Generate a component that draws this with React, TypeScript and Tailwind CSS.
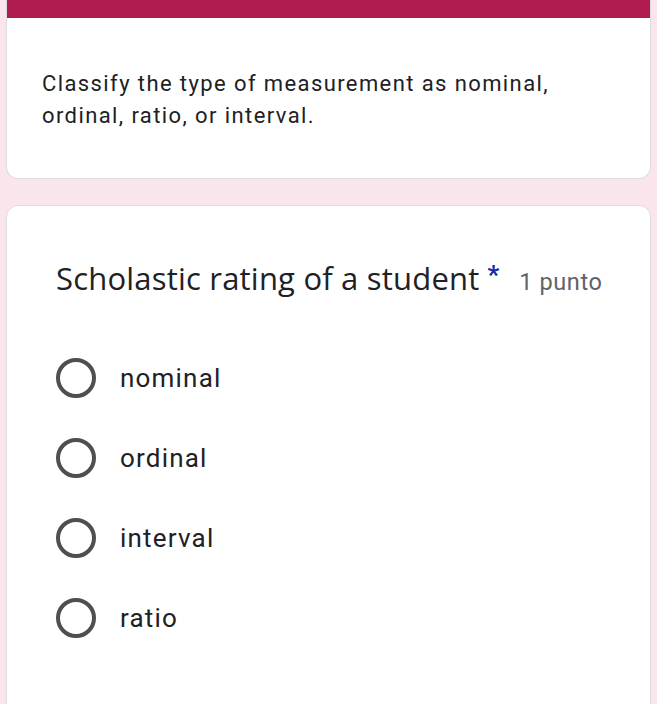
import React from 'react';

const options = ['nominal', 'ordinal', 'interval', 'ratio'];

function Radio() {
  return (
    <span className="block w-[40px] h-[40px] rounded-full border-[4px] border-[#4f4f4f] shrink-0" />
  );
}

export default function App() {
  return (
    <div className="w-[657px] h-[704px] overflow-hidden bg-[#fbe5ec] px-[6px]" style={{ fontFamily: 'Roboto, "Liberation Sans", sans-serif' }}>
      {/* Description card */}
      <div className="bg-white rounded-b-[12px] border border-t-0 border-[#dadce0] overflow-hidden h-[179px]">
        <div className="h-[18px] bg-[#b01c4f]" />
        <div className="pl-[35px] pt-[50px] text-[22px] leading-[32px] tracking-[1.4px] text-[#202124]">
          Classify the type of measurement as nominal,
          <br />
          ordinal, ratio, or interval.
        </div>
      </div>

      {/* Question card */}
      <div className="mt-[26px] bg-white rounded-[12px] border border-[#dadce0] h-[510px]">
        <div className="flex items-baseline pl-[49px] pt-[50px]">
          <span className="text-[31px] leading-[44px] text-[#202124] tracking-[0.2px]" style={{ fontFamily: '"Open Sans", "Noto Sans", sans-serif' }}>
            Scholastic rating of a student
          </span>
          <span className="ml-[8px] text-[26px] font-bold text-[#1a2ba8] relative -top-[6px]">*</span>
          <span className="ml-[20px] text-[23.5px] text-[#5f6368] tracking-[0.6px]">1 punto</span>
        </div>
        <div className="flex flex-col gap-[40px] pt-[57px] pl-[49px]">
          {options.map((o) => (
            <div key={o} className="flex items-center gap-[24px] h-[40px]">
              <Radio />
              <span className="text-[26px] text-[#202124] tracking-[1.2px]">{o}</span>
            </div>
          ))}
        </div>
      </div>
    </div>
  );
}
